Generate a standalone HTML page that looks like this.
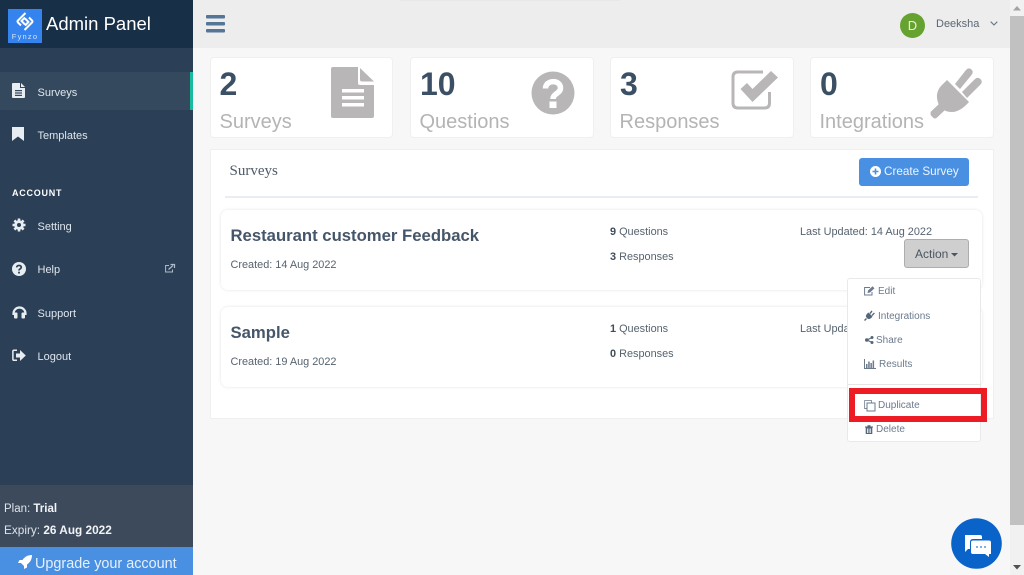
<!DOCTYPE html>
<html><head><meta charset="utf-8"><style>
html,body{margin:0;padding:0;width:1024px;height:575px;overflow:hidden;background:#f7f7f7;font-family:"Liberation Sans",sans-serif;}
.a,.t{position:absolute}
.t{white-space:nowrap;line-height:16px}
svg{position:absolute;overflow:visible}
.nav{color:#dfe6ee;font-size:11px}
.card{position:absolute;background:#fff;border:1px solid #f0f0f0;border-radius:4px;box-sizing:border-box}
.num{font-size:32px;font-weight:bold;color:#3b4f65;line-height:36px}
.lbl{font-size:20px;color:#b5b3b3;line-height:24px}
.sc{position:absolute;left:221px;width:761px;height:80px;background:#fff;border-radius:7px;box-shadow:0 0 3px rgba(0,0,0,.11)}
.sm{font-size:10.900px;color:#56636f}
.sm b{color:#3f4d5c}
.h{font-size:16.700px;font-weight:bold;color:#46566a;line-height:20px}
.dd{font-size:10px;color:#6c7a8c}
</style></head><body>
<div class="a" style="left:193px;top:0;width:817px;height:48px;background:#ededed"></div>
<div class="a" style="left:400px;top:0;width:220px;height:1px;background:#e7e7e7"></div>
<div class="a" style="left:0;top:0;width:193px;height:575px;background:#2b3f56"></div>
<div class="a" style="left:0;top:0;width:193px;height:48px;background:#182f48"></div>
<div class="a" style="left:0;top:72px;width:190px;height:38px;background:#35495e"></div>
<div class="a" style="left:190px;top:72px;width:3px;height:38px;background:#1abb9c"></div>
<div class="a" style="left:0;top:485px;width:193px;height:62px;background:#3c4a5c"></div>
<div class="a" style="left:0;top:547px;width:193px;height:28px;background:#4a90e2"></div>

<!-- logo -->
<div class="a" style="left:8px;top:9px;width:34px;height:34px;background:#3583ee"></div>
<svg style="left:8px;top:9px" width="34" height="34" viewBox="0 0 34 34"><g fill="none" stroke="#fff" stroke-width="2"><path d="M17.500 4L10 11.500Q9 12.500 10 13.500L13 16.500"/><path d="M16.500 21L24 13.500Q25 12.500 24 11.500L21 8.500"/><path d="M17 8.500L13.500 12L17 15.500"/><path d="M17 16.500L20.500 13L17 9.500"/></g></svg>
<div class="t" style="left:8px;top:30px;width:34px;text-align:center;font-size:7.500px;letter-spacing:1.200px;color:#d5e6fb;line-height:14px">Fynzo</div>
<div class="t" style="left:46px;top:13px;font-size:18.500px;line-height:22px;color:#fff">Admin Panel</div>

<!-- hamburger -->
<svg style="left:206px;top:15px" width="19" height="18"><g fill="#557596"><rect width="19" height="3.500" rx="1"/><rect y="7" width="19" height="3.500" rx="1"/><rect y="14" width="19" height="3.500" rx="1"/></g></svg>

<!-- nav -->
<svg style="left:12px;top:83px" width="13" height="15" viewBox="0 0 13 15"><path fill="#e8edf2" d="M1 0H8V5H13V14Q13 15 12 15H1Q0 15 0 14V1Q0 0 1 0ZM9 0L13 4H9ZM3 7V8.200H10V7ZM3 9.400V10.600H10V9.400ZM3 11.800V13H10V11.800Z" fill-rule="evenodd"/></svg>
<div class="t nav" style="left:37.500px;top:84.500px">Surveys</div>
<svg style="left:12px;top:127px" width="12" height="14"><path fill="#e8edf2" d="M0 0H12V14L6 9.500L0 14Z"/></svg>
<div class="t nav" style="left:37.500px;top:127.500px">Templates</div>
<div class="t" style="left:12px;top:185px;font-size:9px;font-weight:bold;letter-spacing:.75px;color:#fff">ACCOUNT</div>

<svg style="left:12px;top:218px" width="14" height="14" viewBox="0 0 14 14"><g stroke="#e8edf2" stroke-width="2.600"><path d="M7 .5V13.500M.5 7H13.500M2.400 2.400L11.600 11.600M11.600 2.400L2.400 11.600"/></g><circle cx="7" cy="7" r="4.800" fill="#e8edf2"/><circle cx="7" cy="7" r="2" fill="#2b3f56"/></svg>
<div class="t nav" style="left:37.500px;top:218.500px">Setting</div>
<svg style="left:12px;top:262px" width="14" height="14" viewBox="0 0 14 14"><circle cx="7" cy="7" r="7" fill="#e8edf2"/><path d="M4.700 5.400C4.800 2.800 9.300 2.800 9.300 5.300C9.300 6.800 7 6.800 7 8.500" fill="none" stroke="#2b3f56" stroke-width="1.700"/><rect x="6.100" y="9.700" width="1.800" height="1.800" fill="#2b3f56"/></svg>
<div class="t nav" style="left:37.500px;top:261.500px">Help</div>
<svg style="left:165px;top:264px" width="10" height="9" viewBox="0 0 10 9"><path d="M7.500 5.500V8H.6V1.500H4" fill="none" stroke="#aebccb" stroke-width="1"/><path d="M3.500 5.500L8 1.500M5.500 .5H9.500V4" fill="none" stroke="#aebccb" stroke-width="1.200"/></svg>
<svg style="left:12px;top:306px" width="15" height="13" viewBox="0 0 15 13"><path d="M1.500 9V7.500A6 6 0 0 1 13.500 7.500V9" fill="none" stroke="#e8edf2" stroke-width="2.200"/><rect x="2" y="6.500" width="3.500" height="6" rx="1" fill="#e8edf2"/><rect x="9.500" y="6.500" width="3.500" height="6" rx="1" fill="#e8edf2"/></svg>
<div class="t nav" style="left:37.500px;top:305.500px">Support</div>
<svg style="left:12px;top:349px" width="14" height="13" viewBox="0 0 14 13"><path d="M5 1.200H2Q.9 1.200 .9 2.300V10.200Q.9 11.300 2 11.300H5" fill="none" stroke="#e8edf2" stroke-width="1.500"/><path fill="#e8edf2" d="M4 4.500H8V1L13.800 6.500L8 12V8.500H4Z"/></svg>
<div class="t nav" style="left:37.500px;top:348.500px">Logout</div>

<div class="t" style="left:4px;top:500.500px;font-size:11.500px;color:#dfe4ea">Plan: <b style="color:#f2f4f6">Trial</b></div>
<div class="t" style="left:4px;top:521.500px;font-size:11.800px;color:#dfe4ea">Expiry: <b style="color:#f2f4f6">26 Aug 2022</b></div>
<svg style="left:18px;top:555px" width="14" height="14" viewBox="0 0 14 14"><path fill="#fff" d="M14 0C9.500 0 6.500 2 4.500 5H1.500L0 8H3L6 11V14L9 12.500V9.500C12 7.500 14 4.500 14 0Z"/></svg>
<div class="t" style="left:35px;top:554.500px;font-size:14.400px;line-height:18px;color:#e6f0fb">Upgrade your account</div>

<!-- top right -->
<div class="a" style="left:900px;top:13px;width:25px;height:25px;border-radius:50%;background:#65a230;color:#eaf3dc;font-size:13px;line-height:25px;text-align:center">D</div>
<div class="t" style="left:936px;top:16px;font-size:11px;color:#5b6672">Deeksha</div>
<svg style="left:990px;top:21px" width="8" height="5"><path d="M.7 .7L4 4L7.300 .7" fill="none" stroke="#6a7480" stroke-width="1.100"/></svg>

<!-- stat cards -->
<div class="card" style="left:210px;top:57px;width:183px;height:81px"></div>
<div class="card" style="left:410px;top:57px;width:184px;height:81px"></div>
<div class="card" style="left:610px;top:57px;width:184px;height:81px"></div>
<div class="card" style="left:810px;top:57px;width:184px;height:81px"></div>
<div class="t num" style="left:219.500px;top:66px">2</div>
<div class="t lbl" style="left:219.500px;top:110px">Surveys</div>
<div class="t num" style="left:420px;top:66px">10</div>
<div class="t lbl" style="left:419.500px;top:110px">Questions</div>
<div class="t num" style="left:620px;top:66px">3</div>
<div class="t lbl" style="left:619.500px;top:110px">Responses</div>
<div class="t num" style="left:820px;top:66px">0</div>
<div class="t lbl" style="left:819.500px;top:110px">Integrations</div>

<svg style="left:331px;top:67px" width="44" height="51" viewBox="0 0 44 51"><path fill-rule="evenodd" fill="#b8b6b6" d="M2 0H27V16Q27 18 29 18H43V49Q43 51 41 51H2Q0 51 0 49V2Q0 0 2 0ZM11 22V25.500H33V22ZM11 29V32.500H33V29ZM11 36V39.500H33V36Z"/><path fill="#b8b6b6" d="M29 1L43 14.500H31Q29 14.500 29 12.500Z"/></svg>
<svg style="left:531px;top:71px" width="44" height="44" viewBox="0 0 44 44"><circle cx="22" cy="22" r="21.500" fill="#b8b6b6"/><path d="M14.500 17.500C14.500 8.500 29.500 8.500 29.500 17C29.500 22.500 22 22.500 22 28" fill="none" stroke="#fff" stroke-width="5.500"/><rect x="18.500" y="30.500" width="7" height="6.500" fill="#fff"/></svg>
<svg style="left:731px;top:70px" width="48" height="40" viewBox="0 0 48 40"><path d="M38.500 22V33Q38.500 38 33.500 38H7Q2 38 2 33V7Q2 2 7 2H32" fill="none" stroke="#b8b6b6" stroke-width="3"/><path d="M9.500 19L16 13L21.500 19L40 1L47 7.500L21.500 32Z" fill="#b8b6b6"/></svg>
<svg style="left:930px;top:67px" width="53" height="52" viewBox="0 0 53 52"><g fill="#b8b6b6"><path d="M1 44.500L9 37L15 43L6.500 51Q5 52 3.500 51L1 48.500Q0 46 1 44.500Z"/><path d="M9 38Q4 27 11 19L17 13L39 35Q30 45 22 45Q17 45 14 43Z"/><path d="M25 17L36 3Q38.500 0 41.500 2.500Q44 5 41.500 8L30 22Z"/><path d="M32 25L45 12Q47.500 9.500 50.500 12Q53 15 50.500 17.500L37 31Z"/></g></svg>

<!-- panel -->
<div class="a" style="left:210px;top:149px;width:784px;height:270px;background:#fff;border:1px solid #f0f0f0;box-sizing:border-box"></div>
<div class="t" style="left:229.500px;top:163px;font-family:'Liberation Serif',serif;font-size:15px;color:#4f5b68">Surveys</div>
<div class="a" style="left:225px;top:196px;width:753px;height:2px;background:#e9ecf0"></div>
<div class="a" style="left:859px;top:158px;width:110px;height:28px;background:#4a90e2;border-radius:3px"></div>
<svg style="left:870px;top:166px" width="11" height="11" viewBox="0 0 11 11"><circle cx="5.500" cy="5.500" r="5.500" fill="#fff"/><path d="M5.500 2.500V8.500M2.500 5.500H8.500" stroke="#4a90e2" stroke-width="1.600"/></svg>
<div class="t" style="left:884px;top:164px;font-size:11.700px;color:#eef5fd">Create Survey</div>

<div class="sc" style="top:210px"></div>
<div class="sc" style="top:307px"></div>
<div class="t h" style="left:230.500px;top:226px">Restaurant customer Feedback</div>
<div class="t sm" style="left:230.500px;top:257px">Created: 14 Aug 2022</div>
<div class="t sm" style="left:610px;top:223.500px"><b>9</b> Questions</div>
<div class="t sm" style="left:610px;top:248.500px"><b>3</b> Responses</div>
<div class="t sm" style="left:800px;top:223.500px">Last Updated: 14 Aug 2022</div>
<div class="a" style="left:904px;top:239px;width:65px;height:29px;box-sizing:border-box;background:#cfcfcf;border:1px solid #adadad;border-radius:3px"></div>
<div class="t" style="left:915px;top:245.500px;font-size:12px;color:#4a5560">Action</div>
<svg style="left:951px;top:253px" width="7" height="4"><path d="M0 0H7L3.500 3.500Z" fill="#4a5560"/></svg>

<div class="t h" style="left:230.500px;top:323px">Sample</div>
<div class="t sm" style="left:230.500px;top:354px">Created: 19 Aug 2022</div>
<div class="t sm" style="left:610px;top:320.500px"><b>1</b> Questions</div>
<div class="t sm" style="left:610px;top:345.500px"><b>0</b> Responses</div>
<div class="t sm" style="left:800px;top:320.500px">Last Updated: 19 Aug 2022</div>

<!-- dropdown -->
<div class="a" style="left:847px;top:278px;width:134px;height:164px;background:#fff;border:1px solid #e9e9e9;border-radius:3px;box-sizing:border-box"></div>
<div class="a" style="left:848px;top:384px;width:132px;height:1px;background:#e5e5e5"></div>
<svg style="left:864px;top:286px" width="11" height="10" viewBox="0 0 11 10"><path d="M8 6V9H.6V1.500H6" fill="none" stroke="#6c7a8c"/><path d="M3.500 7L4 4.500L8.500 .3L10.500 2.300L6 6.500Z" fill="#6c7a8c"/></svg>
<div class="t dd" style="left:878px;top:283.500px">Edit</div>
<svg style="left:864px;top:310px" width="11" height="11" viewBox="0 0 11 11"><g fill="#55657a"><path d="M0 10L2 8L3 9L1 11Z"/><path d="M2 7Q1.500 4.500 4.500 2.500L8.500 6.500Q6.500 9.500 4 9Z"/><path d="M5.500 3L7.500 .5L8.500 1.300L6.700 4Z"/><path d="M7.500 5L10 2.500L10.800 3.500L8.500 6Z"/></g></svg>
<div class="t dd" style="left:878px;top:308.500px">Integrations</div>
<svg style="left:865px;top:336px" width="9" height="8" viewBox="0 0 9 8"><g fill="#55657a"><circle cx="1.800" cy="4" r="1.800"/><circle cx="7" cy="1.500" r="1.500"/><circle cx="7" cy="6.500" r="1.500"/></g><path d="M2 4L7 1.500M2 4L7 6.500" stroke="#55657a"/></svg>
<div class="t dd" style="left:876px;top:332.500px">Share</div>
<svg style="left:864px;top:359px" width="12" height="10" viewBox="0 0 12 10"><path d="M.5 0V9.500H12" fill="none" stroke="#6c7a8c"/><g fill="#6c7a8c"><rect x="2" y="5" width="1.500" height="4"/><rect x="4.200" y="2.500" width="1.500" height="6.500"/><rect x="6.400" y="4" width="1.500" height="5"/><rect x="8.600" y="1.500" width="1.500" height="7.500"/></g></svg>
<div class="t dd" style="left:879px;top:357px">Results</div>
<svg style="left:864px;top:400px" width="12" height="12" viewBox="0 0 12 12"><path d="M2.500 8.500H.6V.6H7.500V2.500" fill="none" stroke="#7e8a99" stroke-width=".9"/><rect x="3" y="3" width="8" height="8" fill="#fff" stroke="#6c7a8c"/></svg>
<div class="t dd" style="left:878px;top:398px">Duplicate</div>
<svg style="left:865px;top:425px" width="8" height="9" viewBox="0 0 8 9"><path fill="#55657a" fill-rule="evenodd" d="M0 1.500H2.500V.3H5.500V1.500H8V2.500H7.300V9H.7V2.500H0ZM2.200 3.500V8H3V3.500ZM3.700 3.500V8H4.400V3.500ZM5.100 3.500V8H5.800V3.500Z"/></svg>
<div class="t dd" style="left:876px;top:422px">Delete</div>
<div class="a" style="left:849px;top:388px;width:138px;height:34px;box-sizing:border-box;border:6px solid #ed1c24"></div>

<!-- scrollbar -->
<div class="a" style="left:1010px;top:0;width:14px;height:575px;background:#f1f1f1"></div>
<div class="a" style="left:1010px;top:16px;width:14px;height:509px;background:#c1c1c1"></div>
<svg style="left:1013px;top:6px" width="8" height="5"><path d="M4 0L8 4.500H0Z" fill="#a3a3a3"/></svg>
<svg style="left:1013px;top:565px" width="8" height="5"><path d="M0 0H8L4 4.500Z" fill="#505050"/></svg>

<!-- chat -->
<svg style="left:951px;top:518px" width="52" height="52" viewBox="0 0 52 52"><circle cx="25.500" cy="25.500" r="25.300" fill="#0a63c9"/><path d="M14 17H29Q31 17 31 19V21H22Q19 21 19 24V31H17L14 34Z" fill="#fff"/><path fill="#fff" d="M22 22.500H38Q40 22.500 40 24.500V36H38V39L34 36H22Q20 36 20 34V24.500Q20 22.500 22 22.500Z"/><g fill="#7fb0e8"><rect x="25" y="28" width="2" height="2"/><rect x="29" y="28" width="2" height="2"/><rect x="33" y="28" width="2" height="2"/></g></svg>
</body></html>
